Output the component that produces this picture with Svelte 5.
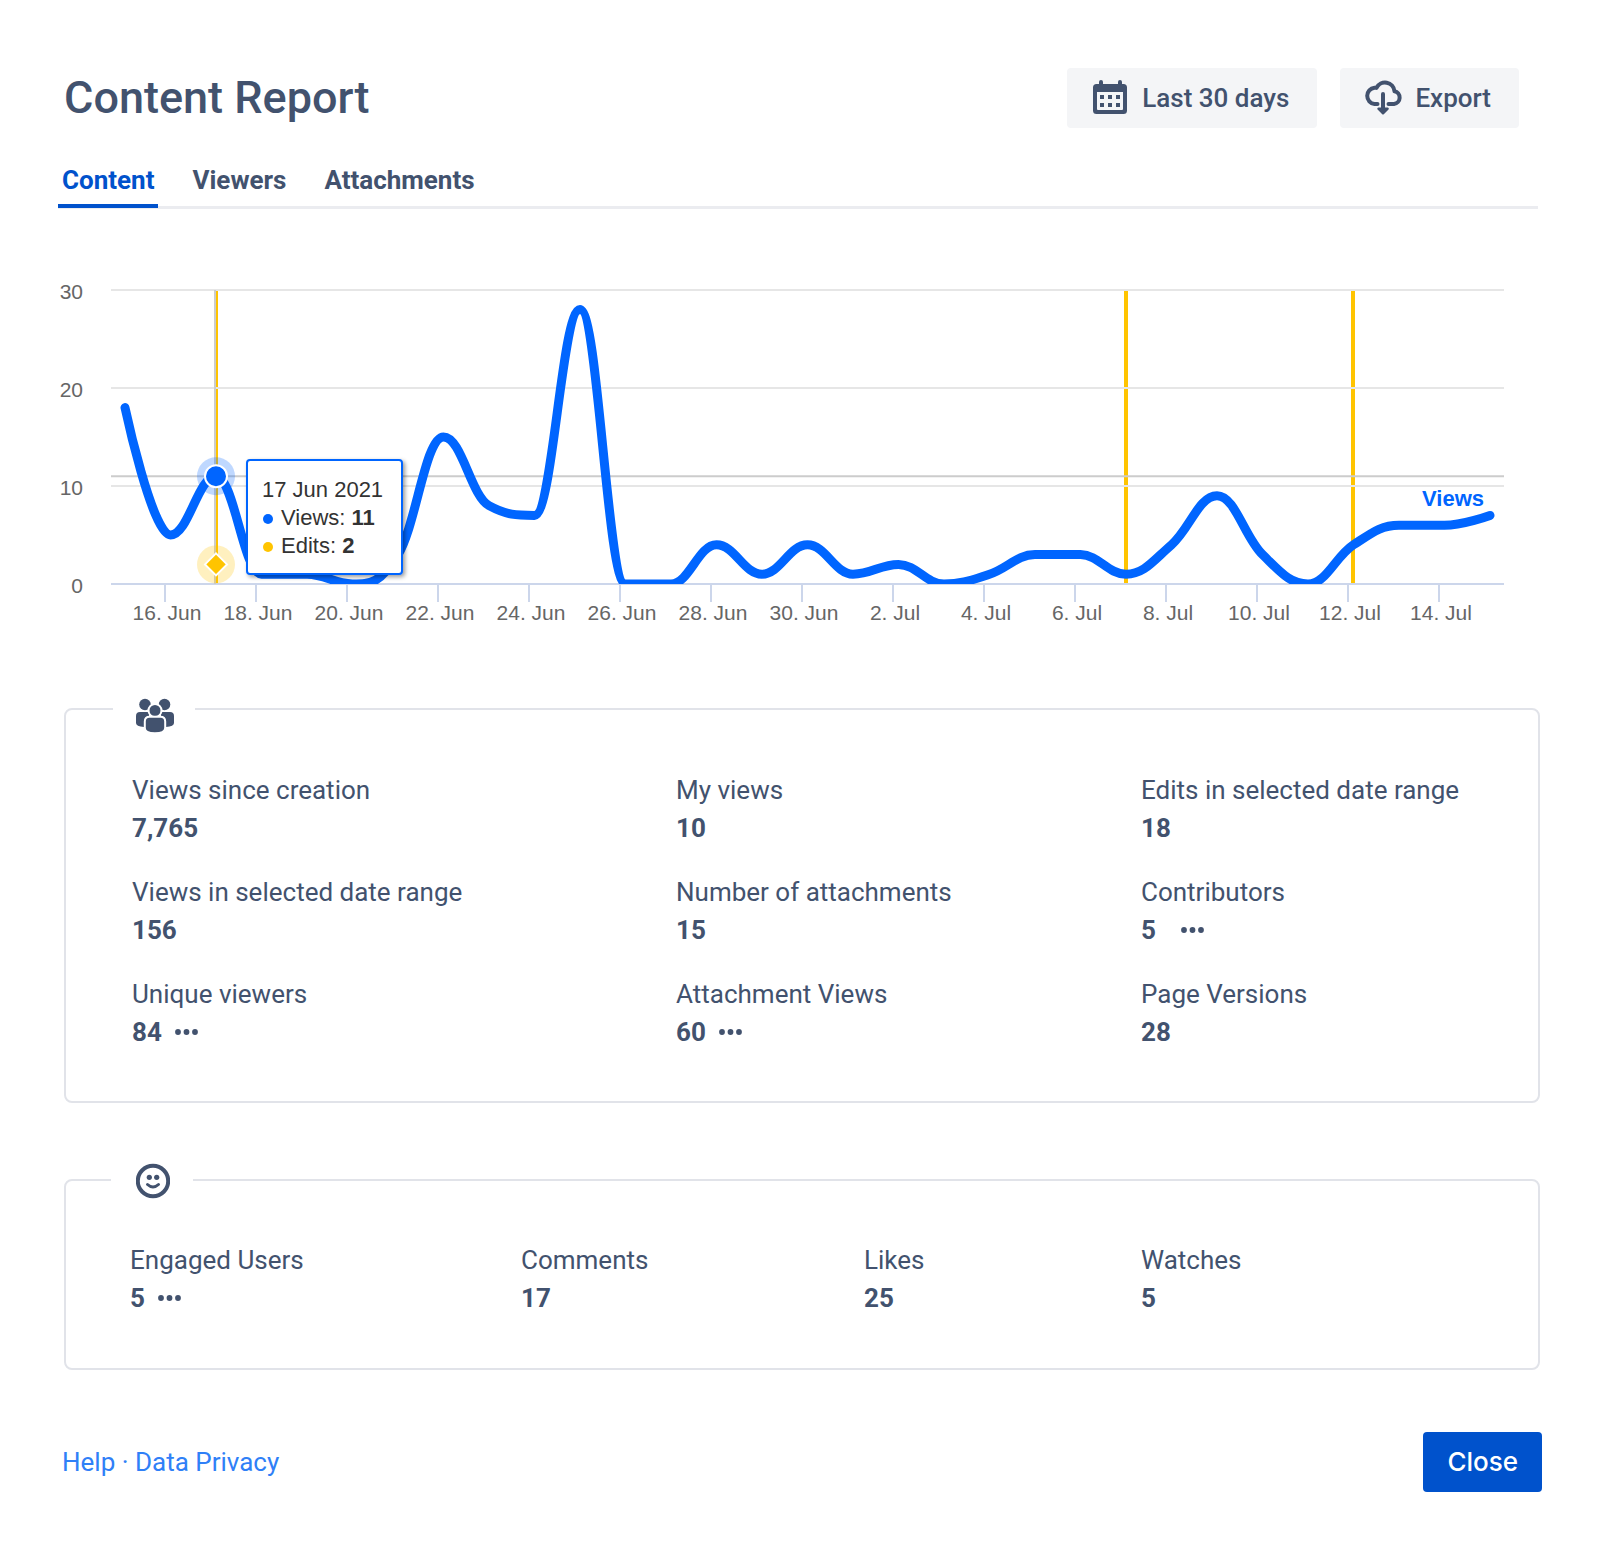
<script lang="ts">
  interface Stat {
    label: string;
    value: string;
    more?: boolean;
    wide?: boolean;
  }

  interface Point {
    x: number;
    y: number;
  }

  const tabs = ['Content', 'Viewers', 'Attachments'];
  let activeTab = $state('Content');

  // Daily views, 15 Jun to 15 Jul 2021.
  const views = [
    18, 5, 11, 1, 1, 0, 3, 15, 8, 7, 28, 0, 0, 4, 1, 4, 1, 2, 0, 1, 3, 3, 1, 4, 9, 3, 0, 4, 6, 6, 7,
  ];

  // Indexes of the days on which the page was edited.
  const editDays = [2, 22, 27];
  const hovered = { day: 2, date: '17 Jun 2021', views: 11, edits: 2 };

  const tickLabels = [
    '16. Jun', '18. Jun', '20. Jun', '22. Jun', '24. Jun', '26. Jun', '28. Jun', '30. Jun',
    '2. Jul', '4. Jul', '6. Jul', '8. Jul', '10. Jul', '12. Jul', '14. Jul',
  ];

  // Chart geometry in viewBox units.
  const W = 1484;
  const H = 350;
  const PLOT_LEFT = 53;
  const PLOT_RIGHT = 1446;
  const PLOT_TOP = 10;
  const PLOT_BOTTOM = 304;
  const FIRST_X = 67;
  const LAST_X = 1432;
  const DAY = (LAST_X - FIRST_X) / (views.length - 1);

  function dayX(i: number): number {
    return FIRST_X + i * DAY;
  }

  function valueY(v: number): number {
    return PLOT_BOTTOM - (v / 30) * (PLOT_BOTTOM - PLOT_TOP);
  }

  // Smooth curve whose control points never overshoot the neighbouring values.
  function spline(points: Point[]): string {
    const smoothing = 1.5;
    const denom = smoothing + 1;
    let d = `M ${points[0].x} ${points[0].y}`;
    let prev = points[0];
    for (let i = 1; i < points.length; i++) {
      const last = points[i - 1];
      const p = points[i];
      const next = points[i + 1];
      let left = p;
      let right = p;
      if (next) {
        const lx = (smoothing * p.x + last.x) / denom;
        const rx = (smoothing * p.x + next.x) / denom;
        let ly = (smoothing * p.y + last.y) / denom;
        let ry = (smoothing * p.y + next.y) / denom;
        const correction = ((ry - ly) * (rx - p.x)) / (rx - lx) + p.y - ry;
        ly += correction;
        ry += correction;
        if (ly > last.y && ly > p.y) {
          ly = Math.max(last.y, p.y);
          ry = 2 * p.y - ly;
        } else if (ly < last.y && ly < p.y) {
          ly = Math.min(last.y, p.y);
          ry = 2 * p.y - ly;
        }
        if (ry > next.y && ry > p.y) {
          ry = Math.max(next.y, p.y);
          ly = 2 * p.y - ry;
        } else if (ry < next.y && ry < p.y) {
          ry = Math.min(next.y, p.y);
          ly = 2 * p.y - ry;
        }
        left = { x: lx, y: ly };
        right = { x: rx, y: ry };
      }
      d += ` C ${prev.x} ${prev.y} ${left.x} ${left.y} ${p.x} ${p.y}`;
      prev = right;
    }
    return d;
  }

  const viewsPath = spline(views.map((v, i) => ({ x: dayX(i), y: valueY(v) })));
  const hoverX = Math.floor(dayX(hovered.day));

  const contentStats: Stat[] = [
    { label: 'Views since creation', value: '7,765' },
    { label: 'My views', value: '10' },
    { label: 'Edits in selected date range', value: '18' },
    { label: 'Views in selected date range', value: '156' },
    { label: 'Number of attachments', value: '15' },
    { label: 'Contributors', value: '5', more: true, wide: true },
    { label: 'Unique viewers', value: '84', more: true },
    { label: 'Attachment Views', value: '60', more: true },
    { label: 'Page Versions', value: '28' },
  ];

  const engagementStats: Stat[] = [
    { label: 'Engaged Users', value: '5', more: true },
    { label: 'Comments', value: '17' },
    { label: 'Likes', value: '25' },
    { label: 'Watches', value: '5' },
  ];
</script>

{#snippet stat(s: Stat)}
  <div class="stat">
    <dt>{s.label}</dt>
    <dd class:wide={s.wide}>
      {s.value}
      {#if s.more}
        <button class="more" aria-label="Show {s.label}">
          <svg width="23" height="6" viewBox="0 0 23 6" aria-hidden="true">
            <circle cx="3" cy="3" r="2.9" />
            <circle cx="11.5" cy="3" r="2.9" />
            <circle cx="20" cy="3" r="2.9" />
          </svg>
        </button>
      {/if}
    </dd>
  </div>
{/snippet}

<main>
  <header>
    <h1>Content Report</h1>
    <div class="actions">
      <button class="action">
        <svg width="38" height="36" viewBox="0 0 38 36" aria-hidden="true">
          <path
            fill-rule="evenodd"
            d="M8 2a2 2 0 0 1 4 0v2h15V2a2 2 0 0 1 4 0v2h1.500a3.500 3.500 0 0 1 3.500 3.500V30.500a3.500 3.500 0 0 1-3.500 3.500H5.500A3.500 3.500 0 0 1 2 30.500V7.500A3.500 3.500 0 0 1 5.500 4H8zM6 12v17a1 1 0 0 0 1 1h24a1 1 0 0 0 1-1V12z"
          />
          <path d="M9 15h4v4H9zM17 15h4v4h-4zM25 15h4v4h-4zM9 23h4v4H9zM17 23h4v4h-4zM25 23h4v4h-4z" />
        </svg>
        Last 30 days
      </button>
      <button class="action">
        <svg width="38" height="36" viewBox="0 0 38 36" aria-hidden="true">
          <path
            class="line"
            d="M13.500 24H10.500A8.200 8.200 0 0 1 10.500 7.700Q11.500 7.600 12.500 7.900A9.500 9.500 0 0 1 30.500 11.200A6.500 6.500 0 0 1 30 24H24.500M19 14V29"
          />
          <path d="M14.500 27.500h9.200a1.200 1.200 0 0 1 .8 2L20 33.900a1.400 1.400 0 0 1-2 0L13.600 29.500a1.200 1.200 0 0 1 .9-2z" />
        </svg>
        Export
      </button>
    </div>
  </header>

  <nav>
    {#each tabs as tab (tab)}
      <button class="tab" class:active={tab === activeTab} onclick={() => (activeTab = tab)}>
        {tab}
      </button>
    {/each}
  </nav>

  <svg class="chart" viewBox="0 0 {W} {H}" role="img" aria-label="Views per day">
    <defs>
      <clipPath id="plot">
        <rect x={PLOT_LEFT} y={PLOT_TOP} width={PLOT_RIGHT - PLOT_LEFT} height={PLOT_BOTTOM - PLOT_TOP} />
      </clipPath>
      <filter id="shadow" x="-10%" y="-10%" width="125%" height="130%">
        <feDropShadow dx="2" dy="2" stdDeviation="2" flood-color="#000" flood-opacity="0.4" />
      </filter>
    </defs>

    {#each editDays as day (day)}
      {@const x = Math.floor(dayX(day))}
      <line x1={x} y1={PLOT_TOP} x2={x} y2={PLOT_BOTTOM} class="edit-line" />
    {/each}
    {#each [30, 20, 10] as v (v)}
      <line x1={PLOT_LEFT} y1={valueY(v)} x2={PLOT_RIGHT} y2={valueY(v)} class="grid-line" />
    {/each}
    {#each [30, 20, 10, 0] as v (v)}
      <text x="25" y={valueY(v) + 9} text-anchor="end" class="axis-label">{v}</text>
    {/each}

    <line x1={PLOT_LEFT} y1={PLOT_BOTTOM} x2={PLOT_RIGHT} y2={PLOT_BOTTOM} class="axis-line" />
    {#each tickLabels as label, i (label)}
      {@const x = 107 + i * 2 * DAY}
      <line x1={x} y1={PLOT_BOTTOM} x2={x} y2={PLOT_BOTTOM + 18} class="axis-line" />
      <text x={x + 2} y={PLOT_BOTTOM + 36} text-anchor="middle" class="axis-label">{label}</text>
    {/each}

    <line x1={hoverX - 1} y1={PLOT_TOP} x2={hoverX - 1} y2={PLOT_BOTTOM} class="crosshair" />
    <line
      x1={PLOT_LEFT}
      y1={valueY(hovered.views)}
      x2={PLOT_RIGHT}
      y2={valueY(hovered.views)}
      class="crosshair"
    />

    <circle cx={hoverX} cy={valueY(hovered.views)} r="19" class="views-halo" />
    <path d={viewsPath} clip-path="url(#plot)" class="views-line" />
    <circle cx={hoverX} cy={valueY(hovered.views)} r="11" class="views-dot" />
    <circle cx={hoverX} cy={valueY(hovered.edits)} r="19" class="edits-halo" />
    <path d="M {hoverX} {valueY(hovered.edits) - 11} l 11 11 l -11 11 l -11 -11 z" class="edits-dot" />

    <text x="1426" y="226" text-anchor="end" class="series-label">Views</text>

    <g class="tooltip">
      <rect x="189" y="180" width="155" height="114" rx="3" filter="url(#shadow)" />
      <text x="204" y="217">{hovered.date}</text>
      <circle cx="210" cy="239" r="5" class="views-key" />
      <text x="223" y="245">Views: <tspan class="strong">{hovered.views}</tspan></text>
      <circle cx="210" cy="267" r="5" class="edits-key" />
      <text x="223" y="273">Edits: <tspan class="strong">{hovered.edits}</tspan></text>
    </g>
  </svg>

  <section class="panel">
    <span class="badge">
      <svg width="38" height="36" viewBox="0 0 38 36" aria-hidden="true">
        <circle cx="9" cy="6.500" r="5.800" />
        <circle cx="28.500" cy="6.500" r="5.800" />
        <path d="M4 14h9v15H8Q0 28.500 0 25V18Q0 14 4 14zM25 14h9q4 0 4 4v7q0 3.500-8 4h-5z" />
        <circle cx="19" cy="12.500" r="6.500" class="cut" />
        <path
          class="cut"
          d="M13.500 18.700h11q4.700 0 4.700 4.700v6.600q0 5.200-10.200 5.200T8.800 30v-6.600q0-4.700 4.700-4.700z"
        />
      </svg>
    </span>
    <dl class="content-stats">
      {#each contentStats as s (s.label)}
        {@render stat(s)}
      {/each}
    </dl>
  </section>

  <section class="panel engagement">
    <span class="badge">
      <svg width="34" height="36" viewBox="0 0 34 36" aria-hidden="true">
        <circle cx="17" cy="18" r="15.200" class="line" />
        <circle cx="13.300" cy="14.300" r="2.600" />
        <circle cx="20.700" cy="14.300" r="2.600" />
        <path d="M11.500 21.500Q17 26.500 22.500 21.500" class="line thin" />
      </svg>
    </span>
    <dl class="engagement-stats">
      {#each engagementStats as s (s.label)}
        {@render stat(s)}
      {/each}
    </dl>
  </section>

  <footer>
    <div class="links"><a href="#help">Help</a> · <a href="#privacy">Data Privacy</a></div>
    <button class="close">Close</button>
  </footer>
</main>

<style>
  :global(body) {
    margin: 0;
    background: #fff;
  }

  main {
    padding: 68px 58px 56px;
    color: #42526e;
    font-family: Roboto, 'Liberation Sans', sans-serif;
    font-size: 26px;
    line-height: 38px;
  }

  svg {
    display: block;
    fill: #42526e;
  }

  .line {
    fill: none;
    stroke: #42526e;
    stroke-width: 4;
    stroke-linecap: round;
    stroke-linejoin: round;
  }

  .line.thin {
    stroke-width: 3;
  }

  button {
    margin: 0;
    border: 0;
    font: inherit;
    color: inherit;
    cursor: pointer;
  }

  header {
    display: flex;
    align-items: center;
    justify-content: space-between;
    padding: 0 23px 0 6px;
  }

  h1 {
    margin: 0;
    font-size: 45px;
    line-height: 60px;
    font-weight: 500;
  }

  .actions {
    display: flex;
    gap: 23px;
  }

  .action {
    display: flex;
    align-items: center;
    gap: 13px;
    height: 60px;
    padding: 0 28px 0 24px;
    border-radius: 4px;
    background: #f4f5f7;
    font-weight: 500;
  }

  nav {
    display: flex;
    gap: 30px;
    height: 50px;
    margin: 28px 4px 0 0;
    border-bottom: 3px solid #ebecf0;
  }

  .tab {
    height: 52px;
    padding: 0 4px;
    border-bottom: 4px solid transparent;
    background: none;
    font-weight: 700;
  }

  .tab.active {
    border-bottom-color: #0052cc;
    color: #0052cc;
  }

  .chart {
    width: 100%;
    height: auto;
    margin-top: 71px;
    font-family: 'Liberation Sans', Arial, sans-serif;
  }

  .grid-line {
    stroke: #e6e6e6;
    stroke-width: 2;
  }

  .axis-line {
    stroke: #ccd6eb;
    stroke-width: 2;
  }

  .crosshair {
    stroke: #ccc;
    stroke-width: 2;
  }

  .edit-line {
    stroke: #ffc400;
    stroke-width: 4;
  }

  .axis-label {
    fill: #666;
    font-size: 21px;
  }

  .views-line {
    fill: none;
    stroke: #0065ff;
    stroke-width: 9;
    stroke-linecap: round;
    stroke-linejoin: round;
  }

  .views-halo {
    fill: #0065ff;
    opacity: 0.25;
  }

  .edits-halo {
    fill: #ffc400;
    opacity: 0.25;
  }

  .views-dot {
    fill: #0065ff;
    stroke: #fff;
    stroke-width: 2;
  }

  .edits-dot {
    fill: #ffc400;
    stroke: #fff;
    stroke-width: 2;
  }

  .series-label {
    fill: #0065ff;
    font-size: 22px;
    font-weight: 700;
  }

  .tooltip {
    fill: #333;
    font-size: 22px;
  }

  .tooltip rect {
    fill: #fff;
    stroke: #0065ff;
    stroke-width: 2;
  }

  .strong {
    font-weight: 700;
  }

  .views-key {
    fill: #0065ff;
  }

  .edits-key {
    fill: #ffc400;
  }

  .panel {
    position: relative;
    margin: 78px 2px 0 6px;
    padding: 61px 0 50px 66px;
    border: 2px solid #e1e3e9;
    border-radius: 8px;
  }

  .panel.engagement {
    margin-top: 76px;
    padding: 60px 0 51px 64px;
  }

  .badge {
    position: absolute;
    top: -12px;
    left: 47px;
    padding: 0 21px 0 23px;
    background: #fff;
  }

  .engagement .badge {
    top: -18px;
    left: 45px;
    padding: 0 23px 0 25px;
  }

  .cut {
    stroke: #fff;
    stroke-width: 2;
  }

  dl {
    display: grid;
    margin: 0;
    row-gap: 26px;
  }

  .content-stats {
    grid-template-columns: 544fr 465fr 397fr;
  }

  .engagement-stats {
    grid-template-columns: 391fr 343fr 277fr 397fr;
  }

  dd {
    display: flex;
    align-items: center;
    gap: 13px;
    margin: 0;
    font-weight: 700;
  }

  dd.wide {
    gap: 25px;
  }

  .more {
    padding: 4px 0;
    background: none;
  }

  footer {
    display: flex;
    align-items: center;
    justify-content: space-between;
    margin-top: 62px;
    padding-left: 4px;
    color: #2f80f7;
  }

  a {
    color: inherit;
    text-decoration: none;
  }

  .close {
    height: 60px;
    padding: 0 24px;
    border-radius: 4px;
    background: #0052cc;
    color: #fff;
    font-family: Inter, Roboto, sans-serif;
    font-weight: 500;
  }
</style>
